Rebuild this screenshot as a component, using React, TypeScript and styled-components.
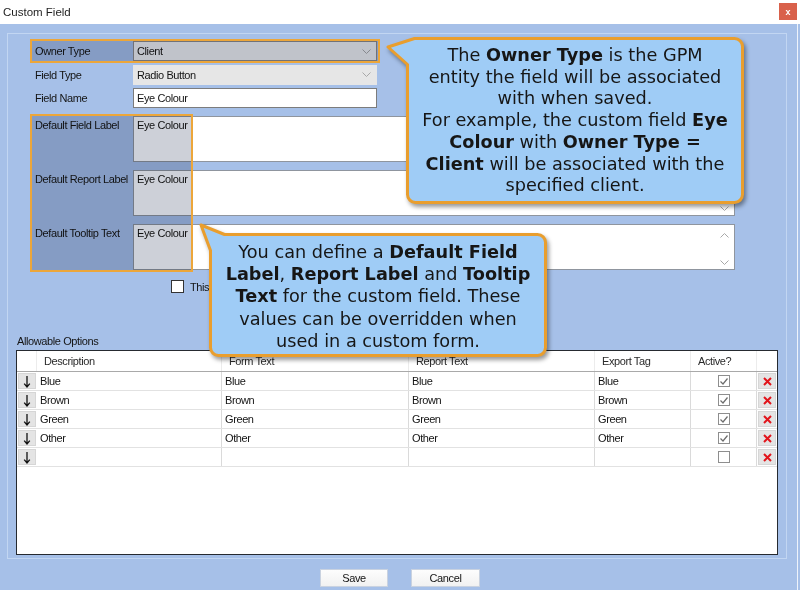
import React from 'react';
import styled, { createGlobalStyle } from 'styled-components';

const GlobalStyle = createGlobalStyle`
  *, *::before, *::after { box-sizing: border-box; }
  html, body { margin: 0; padding: 0; }
  body { width: 800px; height: 590px; overflow: hidden; background: #a6c0e8; }
`;

const uiFont = `'Liberation Sans', Arial, sans-serif`;
const calloutFont = `'DejaVu Sans', Verdana, sans-serif`;

type Option = { label: string; active: boolean };

const options: Option[] = [
  { label: 'Blue', active: true },
  { label: 'Brown', active: true },
  { label: 'Green', active: true },
  { label: 'Other', active: true },
  { label: '', active: false },
];

const gridColumns = '20px 185px 187px 186px 96px 66px 20px';

const Window = styled.div`
  position: relative;
  width: 800px;
  height: 590px;
  display: flex;
  flex-direction: column;
  font-family: ${uiFont};
  font-size: 11px;
  letter-spacing: -0.4px;
  color: #141414;
`;

const TitleBar = styled.div`
  flex: none;
  height: 24px;
  background: #fff;
  display: flex;
  align-items: center;
  justify-content: space-between;
  padding: 0 3px;
`;

const Title = styled.span`
  font-size: 11.5px;
  letter-spacing: 0;
  color: #1e1e1e;
`;

const CloseButton = styled.div`
  width: 18px;
  height: 17px;
  margin-top: -1px;
  background: #d9614b;
  color: #fff;
  font-size: 9px;
  font-weight: bold;
  letter-spacing: 0;
  display: flex;
  align-items: center;
  justify-content: center;
`;

const Body = styled.div`
  flex: 1;
  background: #a6c0e8;
  display: flex;
  flex-direction: column;
  padding-top: 9px;
  box-shadow: inset -2px 0 0 #a6c0e8, inset -3px 0 0 #eef3fb;
`;

const Panel = styled.div`
  margin-left: 7px;
  width: 780px;
  height: 526px;
  border: 1px solid #c2d6f2;
  padding: 7px 8px 0 8px;
  display: flex;
  flex-direction: column;
`;

const Form = styled.div`
  margin-left: 16px;
  display: flex;
  flex-direction: column;
`;

const TopFields = styled.div`
  display: flex;
  flex-direction: column;
  align-items: flex-start;
  gap: 3.5px;
`;

const TextFields = styled.div`
  display: flex;
  flex-direction: column;
  gap: 8px;
`;

// Annotation marker: darkens what it covers and draws the orange frame
const Highlight = styled.div<{ $width?: number; $mt?: number }>`
  position: relative;
  align-self: flex-start;
  margin-top: ${(p) => p.$mt ?? 0}px;

  &::before,
  &::after {
    content: '';
    position: absolute;
    top: -2px;
    bottom: -2px;
    left: -2px;
    width: ${(p) => (p.$width ? `${p.$width}px` : 'calc(100% + 5px)')};
    pointer-events: none;
  }
  &::before {
    background: #cdd0d8;
    mix-blend-mode: multiply;
  }
  &::after {
    border: 2px solid #eca63a;
  }
`;

const FieldRow = styled.div<{ $h: number; $top?: boolean }>`
  display: flex;
  align-items: ${(p) => (p.$top ? 'flex-start' : 'center')};
  height: ${(p) => p.$h}px;
`;

const Label = styled.div<{ $top?: boolean }>`
  width: 101px;
  flex: none;
  padding-left: 3px;
  padding-top: ${(p) => (p.$top ? 3 : 0)}px;
  white-space: nowrap;
`;

const Combo = styled.div<{ $focused?: boolean }>`
  width: 244px;
  height: 20px;
  display: flex;
  align-items: center;
  justify-content: space-between;
  padding: 0 5px 0 3px;
  background: ${(p) => (p.$focused ? '#efefef' : '#e6e6e6')};
  border: 1px solid ${(p) => (p.$focused ? '#8c8c8c' : '#e6e6e6')};
`;

const TextInput = styled.div`
  width: 244px;
  height: 20px;
  display: flex;
  align-items: center;
  padding-left: 3px;
  background: #fff;
  border: 1px solid #7c7c7c;
`;

const TextArea = styled.div`
  width: 602px;
  height: 46px;
  display: flex;
  justify-content: space-between;
  background: #fff;
  border: 1px solid #8f959e;
  padding: 2px 0 0 3px;
`;

const ScrollArrows = styled.div`
  display: flex;
  flex-direction: column;
  justify-content: space-between;
  padding: 6px 5px 4px 0;
`;

const CheckRow = styled.div`
  display: flex;
  align-items: center;
  margin-top: 10px;
  padding-left: 139px;
  height: 13px;
  gap: 6px;
`;

const CheckBox = styled.div`
  width: 13px;
  height: 13px;
  background: #fff;
  border: 1px solid #333;
`;

const OptionsLabel = styled.div`
  margin-top: 42px;
  margin-left: 1px;
  line-height: 12px;
  height: 12px;
`;

const GridBox = styled.div`
  margin-top: 3px;
  height: 205px;
  background: #fff;
  border: 1px solid #262a30;
`;

const GridRow = styled.div<{ $header?: boolean }>`
  display: grid;
  grid-template-columns: ${gridColumns};
  height: ${(p) => (p.$header ? 21 : 19)}px;
  border-bottom: 1px solid ${(p) => (p.$header ? '#a9a9a9' : '#e2e2e2')};
`;

const Cell = styled.div<{ $header?: boolean; $center?: boolean }>`
  display: flex;
  align-items: center;
  justify-content: ${(p) => (p.$center ? 'center' : 'flex-start')};
  padding-left: ${(p) => (p.$center ? 0 : p.$header ? 7 : 3)}px;
  border-right: 1px solid ${(p) => (p.$header ? '#ececec' : '#dadada')};
  white-space: nowrap;
  overflow: hidden;
  color: ${(p) => (p.$header ? '#2a2a2a' : '#141414')};
  &:last-child {
    border-right: none;
  }
`;

const ButtonCell = styled.div`
  margin: 1px;
  background: #e4e4e4;
  border: 1px solid #d6d6d6;
  display: flex;
  align-items: center;
  justify-content: center;
`;

const ActiveBox = styled.div`
  width: 12px;
  height: 12px;
  border: 1px solid #8e8e8e;
  background: #fff;
  display: flex;
  align-items: center;
  justify-content: center;
`;

const ButtonBar = styled.div`
  display: flex;
  justify-content: center;
  gap: 23px;
  margin-top: 10px;
`;

const Button = styled.div<{ $w: number }>`
  width: ${(p) => p.$w}px;
  height: 18px;
  display: flex;
  align-items: center;
  justify-content: center;
  background: linear-gradient(#fdfdfd, #f1f1f1);
  border: 1px solid #c9d2e0;
`;

const CalloutBox = styled.div<{ $x: number; $y: number; $w: number; $h: number; $pad: number; $lh: number }>`
  position: absolute;
  left: ${(p) => p.$x}px;
  top: ${(p) => p.$y}px;
  width: ${(p) => p.$w}px;
  height: ${(p) => p.$h}px;
  padding-top: ${(p) => p.$pad}px;
  font-family: ${calloutFont};
  font-size: 17.7px;
  letter-spacing: 0;
  line-height: ${(p) => p.$lh}px;
  text-align: center;
  color: #161616;
`;

const BalloonSvg = styled.svg`
  position: absolute;
  left: 0;
  top: 0;
  overflow: visible;
  filter: drop-shadow(2px 3px 2px rgba(0, 0, 0, 0.4));
`;

const CalloutText = styled.div`
  position: relative;
`;

const Chevron = ({ up = false }: { up?: boolean }) => (
  <svg width="9" height="5" viewBox="0 0 9 5">
    <polyline
      points={up ? '0.5,4.5 4.5,0.5 8.5,4.5' : '0.5,0.5 4.5,4.5 8.5,0.5'}
      fill="none"
      stroke="#a8a8a8"
      strokeWidth="1"
    />
  </svg>
);

const DownArrow = () => (
  <svg width="8" height="13" viewBox="0 0 8 13">
    <path d="M4 1 V11.5 M1.2 8.6 L4 12 L6.8 8.6" fill="none" stroke="#111" strokeWidth="1.3" />
  </svg>
);

const RedX = () => (
  <svg width="9" height="9" viewBox="0 0 9 9">
    <path d="M1 1 L8 8 M8 1 L1 8" stroke="#e2141b" strokeWidth="2" />
  </svg>
);

const Tick = () => (
  <svg width="10" height="9" viewBox="0 0 10 9">
    <path d="M1.5 4.5 L4 7 L8.5 1.5" fill="none" stroke="#6c6c6c" strokeWidth="1.2" />
  </svg>
);

const balloonPath = (w: number, h: number, tip: [number, number], topJoin: number, leftJoin: number, r = 8) => {
  const s = 1.5;
  const x1 = w - s;
  const y1 = h - s;
  return `M${tip[0]} ${tip[1]} L${s + topJoin} ${s} H${x1 - r} A${r} ${r} 0 0 1 ${x1} ${s + r} V${y1 - r} A${r} ${r} 0 0 1 ${x1 - r} ${y1} H${s + r} A${r} ${r} 0 0 1 ${s} ${y1 - r} V${s + leftJoin} Z`;
};

type CalloutProps = {
  x: number;
  y: number;
  w: number;
  h: number;
  tip: [number, number];
  topJoin: number;
  leftJoin: number;
  pad: number;
  lh: number;
  children: React.ReactNode;
};

const Callout = ({ x, y, w, h, tip, topJoin, leftJoin, pad, lh, children }: CalloutProps) => (
  <CalloutBox $x={x} $y={y} $w={w} $h={h} $pad={pad} $lh={lh}>
    <BalloonSvg width={w} height={h}>
      <path d={balloonPath(w, h, tip, topJoin, leftJoin)} fill="#9fccf6" stroke="#e99e2e" strokeWidth="3" strokeLinejoin="round" />
    </BalloonSvg>
    <CalloutText>{children}</CalloutText>
  </CalloutBox>
);

const TextAreaField = ({ label }: { label: string }) => (
  <FieldRow $h={46} $top>
    <Label $top>{label}</Label>
    <TextArea>
      <span>Eye Colour</span>
      <ScrollArrows>
        <Chevron up />
        <Chevron />
      </ScrollArrows>
    </TextArea>
  </FieldRow>
);

const App: React.FC = () => (
  <Window>
    <GlobalStyle />
    <TitleBar>
      <Title>Custom Field</Title>
      <CloseButton>x</CloseButton>
    </TitleBar>
    <Body>
      <Panel>
        <Form>
          <TopFields>
            <Highlight>
              <FieldRow $h={20}>
                <Label>Owner Type</Label>
                <Combo $focused>
                  <span>Client</span>
                  <Chevron />
                </Combo>
              </FieldRow>
            </Highlight>
            <FieldRow $h={20}>
              <Label>Field Type</Label>
              <Combo>
                <span>Radio Button</span>
                <Chevron />
              </Combo>
            </FieldRow>
            <FieldRow $h={20}>
              <Label>Field Name</Label>
              <TextInput>Eye Colour</TextInput>
            </FieldRow>
          </TopFields>
          <Highlight $width={163} $mt={8}>
            <TextFields>
              <TextAreaField label="Default Field Label" />
              <TextAreaField label="Default Report Label" />
              <TextAreaField label="Default Tooltip Text" />
            </TextFields>
          </Highlight>
          <CheckRow>
            <CheckBox />
            <span>This field is required</span>
          </CheckRow>
        </Form>
        <OptionsLabel>Allowable Options</OptionsLabel>
        <GridBox>
          <GridRow $header>
            <Cell $header />
            <Cell $header>Description</Cell>
            <Cell $header>Form Text</Cell>
            <Cell $header>Report Text</Cell>
            <Cell $header>Export Tag</Cell>
            <Cell $header>Active?</Cell>
            <Cell $header />
          </GridRow>
          {options.map((o, i) => (
            <GridRow key={i}>
              <ButtonCell>
                <DownArrow />
              </ButtonCell>
              <Cell>{o.label}</Cell>
              <Cell>{o.label}</Cell>
              <Cell>{o.label}</Cell>
              <Cell>{o.label}</Cell>
              <Cell $center>
                <ActiveBox>{o.active && <Tick />}</ActiveBox>
              </Cell>
              <ButtonCell>
                <RedX />
              </ButtonCell>
            </GridRow>
          ))}
        </GridBox>
      </Panel>
      <ButtonBar>
        <Button $w={68}>Save</Button>
        <Button $w={69}>Cancel</Button>
      </ButtonBar>
    </Body>

    <Callout x={406} y={37} w={338} h={167} tip={[-18, 10]} topJoin={7} leftJoin={26} pad={8} lh={21.7}>
      The <b>Owner Type</b> is the GPM
      <br />
      entity the field will be associated
      <br />
      with when saved.
      <br />
      For example, the custom field <b>Eye</b>
      <br />
      <b>Colour</b> with <b>Owner Type =</b>
      <br />
      <b>Client</b> will be associated with the
      <br />
      specified client.
    </Callout>

    <Callout x={209} y={233} w={338} h={124} tip={[-8, -8]} topJoin={14} leftJoin={16} pad={8} lh={22.2}>
      You can define a <b>Default Field</b>
      <br />
      <b>Label</b>, <b>Report Label</b> and <b>Tooltip</b>
      <br />
      <b>Text</b> for the custom field. These
      <br />
      values can be overridden when
      <br />
      used in a custom form.
    </Callout>
  </Window>
);

export default App;
